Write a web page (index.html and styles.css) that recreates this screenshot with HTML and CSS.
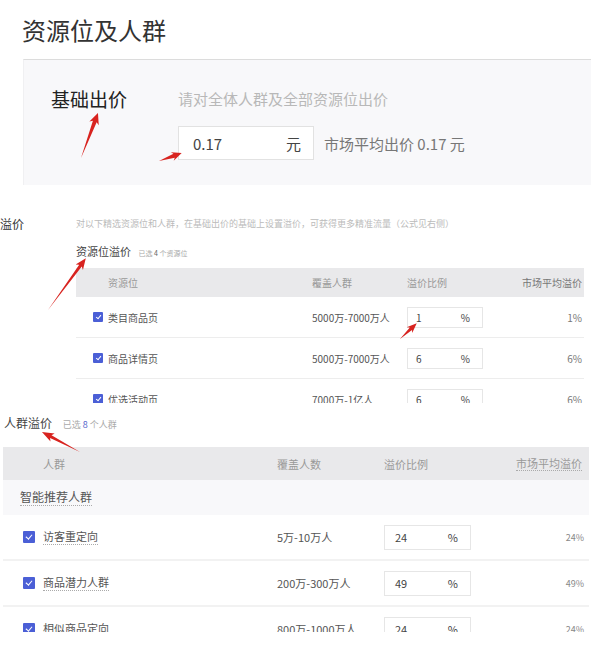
FILE: index.html
```html
<!DOCTYPE html>
<html lang="zh-CN">
<head>
    <meta charset="UTF-8">
    <meta name="viewport" content="width=device-width, initial-scale=1.0">
    <title>资源位及人群</title>
    <link rel="stylesheet" href="styles.css">
</head>
<body>
    <!-- 基础出价 -->
    <div class="shot shot-base">
        <h1 class="title">资源位及人群</h1>
        <div class="base-box">
            <div class="base-label">基础出价</div>
            <div class="base-content">
                <div class="base-hint">请对全体人群及全部资源位出价</div>
                <div class="base-row">
                    <div class="price-input">
                        <span>0.17</span>
                        <span>元</span>
                    </div>
                    <span class="market">市场平均出价 0.17 元</span>
                </div>
            </div>
        </div>
    </div>

    <!-- 资源位溢价 -->
    <div class="shot shot-slot">
        <div class="premium-head">
            <span class="premium-label">溢价</span>
            <span class="premium-hint">对以下精选资源位和人群，在基础出价的基础上设置溢价，可获得更多精准流量（公式见右侧）</span>
        </div>
        <div class="slot-block">
            <div class="sub-title">资源位溢价 <small>已选 <b>4</b> 个资源位</small></div>
            <div class="table slot-table">
                <div class="trow thead">
                    <span class="cell-first">资源位</span>
                    <span>覆盖人群</span>
                    <span>溢价比例</span>
                    <span class="cell-right">市场平均溢价</span>
                </div>
                <div class="trow">
                    <span class="cell-first"><i class="check"></i>类目商品页</span>
                    <span>5000万-7000万人</span>
                    <span><span class="pct-input"><span>1</span><span>%</span></span></span>
                    <span class="cell-right">1%</span>
                </div>
                <div class="trow">
                    <span class="cell-first"><i class="check"></i>商品详情页</span>
                    <span>5000万-7000万人</span>
                    <span><span class="pct-input"><span>6</span><span>%</span></span></span>
                    <span class="cell-right">6%</span>
                </div>
                <div class="trow">
                    <span class="cell-first"><i class="check"></i>优选活动页</span>
                    <span>7000万-1亿人</span>
                    <span><span class="pct-input"><span>6</span><span>%</span></span></span>
                    <span class="cell-right">6%</span>
                </div>
            </div>
        </div>
    </div>

    <!-- 人群溢价 -->
    <div class="shot shot-crowd">
        <div class="crowd-clip">
            <div class="sub-title crowd-title">人群溢价 <small>已选 <b>8</b> 个人群</small></div>
            <div class="table crowd-table">
                <div class="trow thead">
                    <span class="cell-first">人群</span>
                    <span>覆盖人数</span>
                    <span>溢价比例</span>
                    <span class="cell-right"><span class="dotted">市场平均溢价</span></span>
                </div>
                <div class="group-row"><span class="dotted">智能推荐人群</span></div>
                <div class="trow">
                    <span class="cell-first"><i class="check"></i><span class="dotted">访客重定向</span></span>
                    <span>5万-10万人</span>
                    <span><span class="pct-input"><span>24</span><span>%</span></span></span>
                    <span class="cell-right">24%</span>
                </div>
                <div class="trow">
                    <span class="cell-first"><i class="check"></i><span class="dotted">商品潜力人群</span></span>
                    <span>200万-300万人</span>
                    <span><span class="pct-input"><span>49</span><span>%</span></span></span>
                    <span class="cell-right">49%</span>
                </div>
                <div class="trow">
                    <span class="cell-first"><i class="check"></i><span class="dotted">相似商品定向</span></span>
                    <span>800万-1000万人</span>
                    <span><span class="pct-input"><span>24</span><span>%</span></span></span>
                    <span class="cell-right">24%</span>
                </div>
            </div>
        </div>
    </div>

    <!-- red annotation arrows drawn over the screenshots -->
    <svg class="arrows" width="591" height="646" viewBox="0 0 591 646">
        <g fill="#d8231f">
            <path transform="translate(81 158) rotate(-69.3)" d="M0,0 L39,-2 L37,-5 L48,0 L37,5 L39,2 Z"/>
            <path transform="translate(159 161) rotate(-19.2)" d="M0,0 L16,-2 L14,-4.5 L24,0 L14,4.5 L16,2 Z"/>
            <path transform="translate(48 310) rotate(-53.8)" d="M0,0 L55,-1.6 L53,-4.5 L64,0 L53,4.5 L55,1.6 Z"/>
            <path transform="translate(400 339) rotate(-43.3)" d="M0,0 L15,-1.6 L13,-4 L23,0 L13,4 L15,1.6 Z"/>
            <path transform="translate(80 452) rotate(-152.2)" d="M0,0 L33,-1.6 L31,-4.5 L43,0 L31,4.5 L33,1.6 Z"/>
        </g>
    </svg>
</body>
</html>
```

FILE: styles.css
```css
body {
    margin: 0;
    width: 591px;
    height: 646px;
    position: relative;
    overflow: hidden;
    background-color: #fff;
    font-family: "Noto Sans CJK SC", "Liberation Sans", sans-serif;
    color: #444;
}

.shot {
    overflow: hidden;
}

/* ---------- section 1 ---------- */
.shot-base {
    height: 188px;
    padding-top: 12px;
    box-sizing: border-box;
}

.title {
    margin: 0 0 0 22px;
    font-size: 24px;
    line-height: 36px;
    font-weight: normal;
    color: #333;
}

.base-box {
    margin: 11px 0 0 23px;
    height: 126px;
    box-sizing: border-box;
    padding: 27px 0 0 27px;
    background-color: #f8f8fa;
    border-top: 1px solid #dcdcdc;
    border-left: 1px solid #f0f0f2;
    display: flex;
}

.base-label {
    width: 127px;
    font-size: 19px;
    line-height: 24px;
    color: #222;
}

.base-content {
    display: flex;
    flex-direction: column;
    gap: 15px;
}

.base-hint {
    font-size: 15px;
    line-height: 24px;
    color: #b8b8b8;
}

.base-row {
    display: flex;
    align-items: center;
    gap: 10px;
}

.price-input {
    width: 136px;
    height: 34px;
    box-sizing: border-box;
    padding: 0 12px 0 14px;
    display: flex;
    align-items: center;
    justify-content: space-between;
    background-color: #fff;
    border: 1px solid #e2e2e2;
    font-size: 15px;
    color: #444;
}

.market {
    font-size: 15px;
    color: #777;
}

/* ---------- section 2 ---------- */
.shot-slot {
    height: 215px;
    padding-top: 27px;
    box-sizing: border-box;
}

.premium-head {
    display: flex;
    align-items: center;
    line-height: 18px;
}

.premium-label {
    width: 76px;
    font-size: 12px;
    color: #333;
}

.premium-hint {
    font-size: 9px;
    color: #bbb;
    white-space: nowrap;
}

.slot-block {
    margin: 9px 0 0 76px;
}

.sub-title {
    font-size: 11px;
    line-height: 18px;
    color: #444;
}

.sub-title small {
    margin-left: 5px;
    font-size: 7px;
    color: #aaa;
}

.sub-title b {
    font-weight: normal;
    color: #666;
}

.table {
    margin-top: 6px;
}

.trow {
    display: grid;
    align-items: center;
    box-sizing: border-box;
    border-bottom: 1px solid #ededed;
}

.thead {
    background-color: #e9e9eb;
    color: #999;
    border-bottom: none;
}

.cell-first {
    display: flex;
    align-items: center;
}

.cell-right {
    display: flex;
    justify-content: flex-end;
}

.check {
    display: inline-block;
    position: relative;
    background-color: #4b5fd6;
    border-radius: 1px;
}

.check::after {
    content: "";
    position: absolute;
    left: 35%;
    top: 18%;
    width: 22%;
    height: 42%;
    border: solid #fff;
    border-width: 0 1px 1px 0;
    transform: rotate(40deg);
}

.pct-input {
    display: flex;
    align-items: center;
    justify-content: space-between;
    box-sizing: border-box;
    background-color: #fff;
    border: 1px solid #e6e6e6;
    color: #444;
}

.slot-table {
    width: 508px;
    font-size: 10px;
}

.slot-table .trow {
    grid-template-columns: 236px 95px 1fr 100px;
    height: 41px;
    color: #555;
}

.slot-table .cell-right {
    padding-right: 2px;
}

.slot-table .thead {
    height: 29px;
    color: #999;
}

.slot-table .thead .cell-first {
    padding-left: 32px;
}

.slot-table .cell-first {
    padding-left: 17px;
}

.slot-table .check {
    width: 10px;
    height: 10px;
    margin-right: 5px;
}

.slot-table .pct-input {
    width: 76px;
    height: 21px;
    padding: 0 12px 0 8px;
}

.slot-table .trow .cell-right {
    color: #777;
}

/* ---------- section 3 ---------- */
.shot-crowd {
    height: 241px;
    margin-top: 2px;
}

.crowd-clip {
    height: 227px;
    overflow: hidden;
    padding-top: 9px;
    box-sizing: border-box;
}

.crowd-title {
    margin-left: 4px;
    font-size: 12px;
}

.crowd-title small {
    font-size: 9px;
    margin-left: 8px;
}

.crowd-title b {
    color: #5566cc;
}

.crowd-table {
    margin: 13px 0 0 3px;
    width: 586px;
    font-size: 11px;
}

.crowd-table .trow {
    grid-template-columns: 274px 107px 1fr 120px;
    height: 46px;
    color: #555;
    border-bottom: 2px solid #f2f2f2;
}

.crowd-table .cell-right {
    padding-right: 7px;
}

.crowd-table .thead {
    height: 33px;
    color: #999;
    border-bottom: none;
}

.crowd-table .thead .cell-first {
    padding-left: 40px;
}

.crowd-table .cell-first {
    padding-left: 20px;
}

.crowd-table .check {
    width: 12px;
    height: 12px;
    margin-right: 8px;
}

.crowd-table .pct-input {
    width: 87px;
    height: 25px;
    padding: 0 12px 0 10px;
}

.crowd-table .trow .cell-right {
    font-size: 9px;
    color: #888;
}

.crowd-table .thead .cell-right {
    font-size: 11px;
    color: #999;
}

.group-row {
    height: 35px;
    display: flex;
    align-items: center;
    padding-left: 17px;
    background-color: #f8f8fa;
    color: #555;
    font-size: 12px;
}

.dotted {
    border-bottom: 1px dotted #aaa;
    line-height: 1.3;
}

/* ---------- annotations ---------- */
.arrows {
    position: absolute;
    left: 0;
    top: 0;
    pointer-events: none;
}
```
